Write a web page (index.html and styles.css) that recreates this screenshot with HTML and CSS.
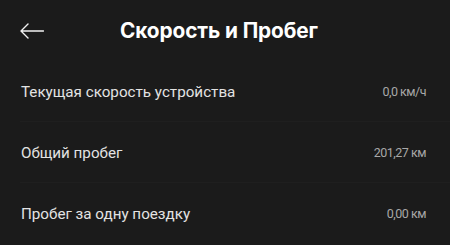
FILE: index.html
```html
<!DOCTYPE html>
<html lang="ru">
<head>
<meta charset="utf-8">
<link rel="stylesheet" href="styles.css">
</head>
<body>
<div class="screen">
  <header class="bar">
    <svg class="back" width="24" height="16" viewBox="0 0 24 16" aria-hidden="true">
      <path d="M23.5 8H1.2M8 1L1 8l7 7" fill="none" stroke="#f2f2f2" stroke-width="1.4" stroke-linecap="round" stroke-linejoin="round"/>
    </svg>
    <h1 class="title">Скорость и Пробег</h1>
  </header>
  <div class="list">
    <div class="row"><span class="label">Текущая скорость устройства</span><span class="value">0,0 км/ч</span></div>
    <div class="row"><span class="label">Общий пробег</span><span class="value">201,27 км</span></div>
    <div class="row last"><span class="label">Пробег за одну поездку</span><span class="value">0,00 км</span></div>
  </div>
</div>
</body>
</html>
```
FILE: styles.css
```css
html, body {
  margin: 0;
  padding: 0;
  background: #1b1b1b;
}
.screen {
  width: 450px;
  height: 245px;
  background: #1b1b1b;
  overflow: hidden;
}
.bar {
  height: 61px;
  display: flex;
  align-items: center;
  padding-left: 20px;
}
.back {
  display: block;
  flex: none;
}
.title {
  margin: 0 0 0 76px;
  font-family: Inter, "Noto Sans", sans-serif;
  font-weight: 700;
  font-size: 20.8px;
  color: #ffffff;
  letter-spacing: -0.1px;
}
.row {
  height: 61px;
  display: flex;
  align-items: center;
  justify-content: space-between;
  padding: 0 24px 0 21px;
  box-sizing: border-box;
  position: relative;
}
.row::after {
  content: "";
  position: absolute;
  left: 20px;
  right: 0;
  bottom: 0;
  height: 1px;
  background: #1f1f1f;
}
.row.last::after {
  display: none;
}
.label {
  font-family: Roboto, "Noto Sans", sans-serif;
  font-size: 15.2px;
  color: #e3e3e3;
}
.value {
  font-family: Roboto, "Noto Sans", sans-serif;
  font-size: 12.5px;
  letter-spacing: -0.5px;
  color: #a8a8a8;
}
```
